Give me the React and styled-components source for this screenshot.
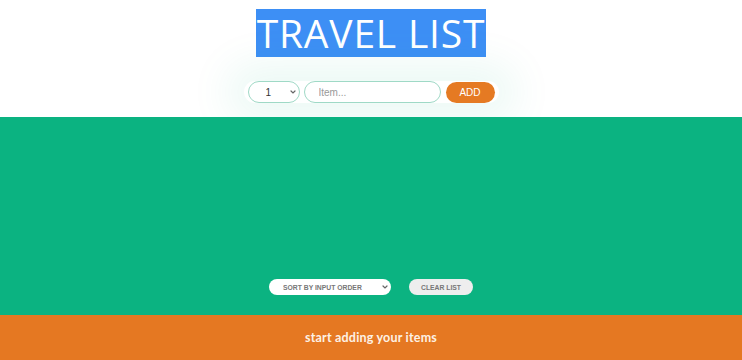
import React from "react";
import styled, { createGlobalStyle } from "styled-components";

const Global = createGlobalStyle`
  html, body { margin: 0; padding: 0; }
  body { font-family: "Open Sans", "Noto Sans", sans-serif; }
`;

const Page = styled.div`
  display: flex;
  flex-direction: column;
  height: 360px;
  width: 742px;
  overflow: hidden;
`;

const Header = styled.header`
  background: #ffffff;
  height: 117px;
  display: flex;
  flex-direction: column;
  align-items: center;
`;

const Title = styled.h1`
  margin: 9px 0 0;
  font-family: "Open Sans", sans-serif;
  font-weight: 400;
  font-size: 39px;
  line-height: 48px;
  letter-spacing: 0.8px;
  color: #ffffff;
  background: #3d8ff5;
  padding: 0 1px;
`;

const Form = styled.form`
  margin-top: 24px;
  display: flex;
  align-items: center;
  gap: 4px;
  padding: 0 4px;
  border-radius: 20px;
  box-shadow: 0 0 40px 18px rgba(11, 179, 129, 0.08);
`;

const SelectWrap = styled.div`
  position: relative;
  display: flex;
  margin-left: ${(p) => p.$ml || 0}px;
`;

const Chevron = styled.svg`
  position: absolute;
  right: ${(p) => p.$right}px;
  top: 50%;
  width: 6px;
  height: 6px;
  margin-top: -3px;
  pointer-events: none;
`;

const Select = styled.select`
  appearance: none;
  -webkit-appearance: none;
  box-sizing: border-box;
  width: ${(p) => p.$w}px;
  height: ${(p) => p.$h}px;
  border-radius: 20px;
  border: ${(p) => (p.$outlined ? "1px solid #9fd9c6" : "none")};
  background: #fff;
  font-family: "Liberation Sans", Arial, sans-serif;
  font-size: ${(p) => p.$fs}px;
  font-weight: ${(p) => (p.$bold ? 700 : 400)};
  color: ${(p) => p.$color};
  padding: 0 0 0 ${(p) => p.$pl}px;
  text-transform: uppercase;
  outline: none;
`;

const Input = styled.input`
  width: 137px;
  height: 22px;
  box-sizing: border-box;
  border-radius: 20px;
  border: 1px solid #9fd9c6;
  padding: 0 14px;
  font-family: "Liberation Sans", Arial, sans-serif;
  font-size: 10px;
  color: #333;
  outline: none;
  &::placeholder { color: #999; }
`;

const Button = styled.button`
  border: none;
  border-radius: 20px;
  cursor: pointer;
  padding: 0;
  font-family: "Liberation Sans", Arial, sans-serif;
  text-transform: uppercase;
  width: ${(p) => p.$w}px;
  height: ${(p) => p.$h}px;
  background: ${(p) => p.$bg};
  color: ${(p) => p.$color};
  font-size: ${(p) => p.$fs}px;
  font-weight: ${(p) => (p.$bold ? 700 : 400)};
  margin-left: ${(p) => p.$ml || 0}px;
`;

const List = styled.main`
  flex: 1;
  background: #0bb381;
  display: flex;
  flex-direction: column;
  justify-content: flex-end;
  align-items: center;
  padding-bottom: 20px;
`;

const Actions = styled.div`
  display: flex;
  align-items: center;
`;

const Footer = styled.footer`
  height: 45px;
  background: #e57822;
  display: flex;
  align-items: center;
  justify-content: center;
  color: #fdf1e4;
  font-family: "Lato", "Open Sans", sans-serif;
  font-weight: 700;
  font-size: 12.5px;
  letter-spacing: 0.2px;
`;

const ChevronIcon = ({ right }) => (
  <Chevron $right={right} viewBox="0 0 6 6">
    <path d="M1 2 L3 4 L5 2" fill="none" stroke="#666" strokeWidth="1.2" strokeLinecap="round" />
  </Chevron>
);

export default function App() {
  return (
    <Page>
      <Global />
      <Header>
        <Title>TRAVEL LIST</Title>
        <Form onSubmit={(e) => e.preventDefault()}>
          <SelectWrap>
            <Select $w={52} $h={22} $fs={10} $pl={17} $color="#333" $outlined defaultValue="1">
              {Array.from({ length: 20 }, (_, i) => (
                <option key={i} value={i + 1}>{i + 1}</option>
              ))}
            </Select>
            <ChevronIcon right={4} />
          </SelectWrap>
          <Input placeholder="Item..." />
          <Button $w={49} $h={21} $bg="#e57a23" $color="#fff" $fs={10} $ml={1}>
            Add
          </Button>
        </Form>
      </Header>
      <List>
        <Actions>
          <SelectWrap>
            <Select $w={122} $h={16} $fs={6.8} $pl={14} $color="#777" $bold defaultValue="input">
              <option value="input">Sort by input order</option>
              <option value="description">Sort by description</option>
              <option value="packed">Sort by packed status</option>
            </Select>
            <ChevronIcon right={3} />
          </SelectWrap>
          <Button $w={64} $h={16} $bg="#eeeeee" $color="#777" $fs={6.8} $bold $ml={18}>
            Clear list
          </Button>
        </Actions>
      </List>
      <Footer>start adding your items</Footer>
    </Page>
  );
}
